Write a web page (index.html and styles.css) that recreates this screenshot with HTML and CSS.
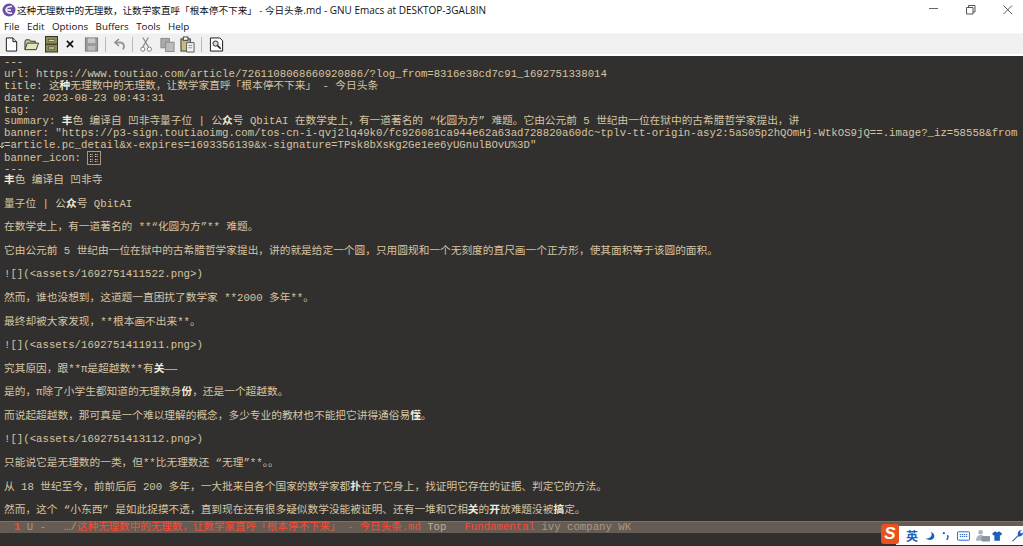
FILE: index.html
```html
<!DOCTYPE html>
<html lang="zh">
<head>
<meta charset="utf-8">
<title>GNU Emacs</title>
<link rel="stylesheet" href="styles.css">
</head>
<body>
<div class="window">
  <header class="titlebar">
    <svg class="appicon" viewBox="0 0 14 14"><circle cx="7" cy="7" r="6.5" fill="#6a4fa8"/><path d="M10 3.500C7 3 4 4.500 4 7s3 3.500 6 3M5 7h4" fill="none" stroke="#fff" stroke-width="1.500"/></svg>
    <span class="title"><span class="title-cjk">这种无理数中的无理数，让数学家直呼「根本停不下来」 - 今日头条</span>.md - GNU Emacs at DESKTOP-3GAL8IN</span>
    <div class="wincontrols">
      <svg width="10" height="10" viewBox="0 0 10 10"><path d="M0 3.500h9" stroke="#666" fill="none"/></svg>
      <svg width="10" height="10" viewBox="0 0 10 10"><path d="M.5 2.500h6.500v6.500H.5zM2.500 2.500V.5h6.500v6.500H7" stroke="#555" fill="none"/></svg>
      <svg width="10" height="10" viewBox="0 0 10 10"><path d="M.5.5l8.500 8.500M9 .5L.5 9" stroke="#555" fill="none"/></svg>
    </div>
  </header>
  <nav class="menubar"><span>File</span><span>Edit</span><span>Options</span><span>Buffers</span><span>Tools</span><span>Help</span></nav>
  <div class="toolbar">
    <svg class="tool" viewBox="0 0 16 17"><path d="M2.500 1.500h7l4 4v10h-11z" fill="#fff" stroke="#111"/><path d="M9.500 1.500v4h4" fill="#ddd" stroke="#111"/></svg>
    <svg class="tool" viewBox="0 0 16 17"><path d="M1 14V5l1-1.500h4L7 5h5v2" fill="#c4c89a" stroke="#333"/><path d="M1 14l2.500-7H15.500L13 14z" fill="#e3e4b8" stroke="#333"/></svg>
    <svg class="tool nar" viewBox="0 0 13 17"><rect x=".5" y=".5" width="12" height="15.500" fill="#8e8a55" stroke="#333"/><path d="M1 8.200h11" stroke="#222"/><rect x="3.500" y="3.500" width="6" height="2" fill="#dcd9a8" stroke="#333" stroke-width=".5"/><rect x="3.500" y="11" width="6" height="2" fill="#dcd9a8" stroke="#333" stroke-width=".5"/></svg>
    <svg class="tool x" viewBox="0 0 9 9"><path d="M1 1l7 7M8 1L1 8" stroke="#111" stroke-width="1.800"/></svg>
    <svg class="tool" viewBox="0 0 16 17"><rect x="1.500" y="1.500" width="13" height="14" fill="#999" stroke="#777"/><rect x="4" y="2" width="8" height="5" fill="#c8c8c8"/><rect x="4" y="10" width="8" height="5" fill="#bbb"/></svg>
    <i class="sep"></i>
    <svg class="tool undo" viewBox="0 0 13 17"><path d="M10 13.500c2-3 1-7-3-7H3" fill="none" stroke="#999" stroke-width="2"/><path d="M6 3L2 6.500 6 10" fill="none" stroke="#888" stroke-width="1.500"/></svg>
    <i class="sep sep2"></i>
    <svg class="tool" viewBox="0 0 16 17"><path d="M3 1l6 10M9 1L3 11" stroke="#888" stroke-width="1.300"/><circle cx="3" cy="13.500" r="2.200" fill="#fff" stroke="#777"/><circle cx="10" cy="13.500" r="2.200" fill="#fff" stroke="#777"/></svg>
    <svg class="tool" viewBox="0 0 16 17"><rect x="1" y="2" width="9" height="10" fill="#aaa" stroke="#888"/><rect x="6" y="6" width="9" height="10" fill="#bbb" stroke="#888"/></svg>
    <svg class="tool" viewBox="0 0 16 17"><rect x="1" y="2.500" width="10" height="13" fill="#c2bd7c" stroke="#333"/><rect x="3.500" y=".5" width="5" height="3.500" fill="#fff" stroke="#333"/><path d="M7 6.500h8v10H7z" fill="#f4f4f4" stroke="#555"/><path d="M9 9.500h4M9 12h4" stroke="#888"/></svg>
    <i class="sep sep3"></i>
    <svg class="tool" viewBox="0 0 16 17"><path d="M1.500 1.500h10l3 3v11h-13z" fill="#fff" stroke="#111"/><circle cx="7" cy="7.500" r="2.800" fill="#cfd8e8" stroke="#222"/><path d="M9 9.500l3.500 3.500" stroke="#111" stroke-width="1.600"/></svg>
  </div>
  <main class="editor">
    <div class="front">
      <div class="row dash">---</div>
      <div class="row">url: https://www.toutiao.com/article/7261108068660920886/?log_from=8316e38cd7c91_1692751338014</div>
      <div class="row">title: 这<b>种</b>无理数中的无理数，让数学家直呼「根本停不下来」 - 今日头条</div>
      <div class="row">date: 2023-08-23 08:43:31</div>
      <div class="row">tag:</div>
      <div class="row">summary: <b>丰</b>色 编译自 凹非寺量子位 | 公<b>众</b>号 QbitAI 在数学史上，有一道著名的 “化圆为方” 难题。它由公元前 5 世纪由一位在狱中的古希腊哲学家提出，讲</div>
      <div class="row">banner: "https://p3-sign.toutiaoimg.com/tos-cn-i-qvj2lq49k0/fc926081ca944e62a63ad728820a60dc~tplv-tt-origin-asy2:5aS05p2hQOmHj-WtkOS9jQ==.image?_iz=58558&amp;from</div>
      <div class="row wrapped"><svg class="fringe" width="4" height="7" viewBox="0 0 4 7"><path d="M4 1H2v4M0 4l2 2 2-2" fill="none" stroke="#d5c4a1"/></svg>=article.pc_detail&amp;x-expires=1693356139&amp;x-signature=TPsk8bXsKg2Ge1ee6yUGnulBOvU%3D"</div>
      <div class="row">banner_icon: <svg class="tofu" width="14" height="14" viewBox="0 0 14 14"><rect x=".5" y=".5" width="13" height="13" fill="none" stroke="#a89984"/><path d="M3 3.500h3M8 3.500h3M3 5.500h3M8 5.500h3M3 8.500h3M8 8.500h3M3 10.500h3M8 10.500h3" stroke="#d5c4a1" stroke-dasharray="1 .6"/></svg></div>
      <div class="row">---</div>
    </div>
    <div class="body">
      <p><b>丰</b>色 编译自 凹非寺</p>
      <p>量子位 | 公<b>众</b>号 QbitAI</p>
      <p>在数学史上，有一道著名的 **“化圆为方”** 难题。</p>
      <p>它由公元前 5 世纪由一位在狱中的古希腊哲学家提出，讲的就是给定一个圆，只用圆规和一个无刻度的直尺画一个正方形，使其面积等于该圆的面积。</p>
      <p>![](&lt;assets/1692751411522.png&gt;)</p>
      <p>然而，谁也没想到，这道题一直困扰了数学家 **2000 多年**。</p>
      <p>最终却被大家发现，**根本画不出来**。</p>
      <p>![](&lt;assets/1692751411911.png&gt;)</p>
      <p>究其原因，跟**π是超越数**有<b>关</b>——</p>
      <p>是的，π除了小学生都知道的无理数身<b>份</b>，还是一个超越数。</p>
      <p>而说起超越数，那可真是一个难以理解的概念，多少专业的教材也不能把它讲得通俗易<b>懂</b>。</p>
      <p>![](&lt;assets/1692751413112.png&gt;)</p>
      <p>只能说它是无理数的一类，但**比无理数还 “无理”**。。</p>
      <p>从 18 世纪至今，前前后后 200 多年，一大批来自各个国家的数学家都<b>扑</b>在了它身上，找证明它存在的证据、判定它的方法。</p>
      <p>然而，这个 “小东西” 是如此捉摸不透，直到现在还有很多疑似数学没能被证明、还有一堆和它相<b>关</b>的<b>开</b>放难题没被<b>搞</b>定。</p>
    </div>
  </main>
  <footer class="modeline"><span class="ml-red ml-num">1</span><span class="ml-gray"> U -</span><span class="ml-path">…/</span><span class="ml-red ml-name">这种无理数中的无理数，让数学家直呼「根本停不下来」 - 今日头条.md</span><span class="ml-tan"> Top</span><span class="ml-red ml-mode">Fundamental</span><span class="ml-dim"> ivy company WK</span></footer>
  <div class="echo"></div>
  <aside class="ime">
    <span class="ime-logo">S</span>
    <div class="ime-bar">
      <span class="ime-ch">英</span>
      <svg width="11" height="12" viewBox="0 0 12 12"><path d="M7 1c2 4 0 8-6 8 3 3 10 2 10-3 0-2-2-4-4-5z" fill="#1d5fbd"/></svg>
      <svg width="8" height="12" viewBox="0 0 8 12"><circle cx="2" cy="3" r="1.200" fill="#1d5fbd"/><path d="M6 5c1 2 0 4-1 5" stroke="#1d5fbd" stroke-width="1.500" fill="none"/></svg>
      <svg width="14" height="10" viewBox="0 0 14 10"><rect x=".5" y=".5" width="13" height="9" rx="1" fill="#fff" stroke="#1d5fbd"/><path d="M3 3.500h8M3 5.500h8" stroke="#1d5fbd" stroke-dasharray="1.500 .7"/></svg>
      <svg class="ime-person" width="15" height="13" viewBox="0 0 15 13"><circle cx="5" cy="3" r="2.500" fill="#a9b3bd"/><path d="M0 12c0-4 2-6 5-6s5 2 5 6z" fill="#a9b3bd"/><rect x="6" y="7" width="9" height="6" rx="1" fill="#8b95a0"/></svg>
      <svg class="ime-shirt" width="11" height="12" viewBox="0 0 13 12"><path d="M4 0l2.500 1.500L9 0l4 3-2 2.500-1-.5v7H3V5l-1 .5L0 3z" fill="#1d5fbd"/></svg>
      <svg class="ime-wrench" width="12" height="13" viewBox="0 0 12 13"><path d="M1 12l6-6c-1-3 1-5 4-5L9 3l1 1.500 2-1c0 3-2 4.500-5 4l-5 5z" fill="#1d5fbd"/></svg>
    </div>
  </aside>
</div>
</body>
</html>
```
FILE: styles.css
```css
* { box-sizing: border-box; }
html, body { margin: 0; padding: 0; background: #32302f; overflow: hidden; }
.window {
  position: relative;
  width: 1023px;
  height: 546px;
  display: flex;
  flex-direction: column;
  overflow: hidden;
}
.titlebar {
  height: 20px;
  background: #fff;
  display: flex;
  align-items: center;
  padding-left: 2px;
  gap: 1px;
  color: #111;
}
.appicon { width: 14px; height: 14px; flex: none; }
.title { font: 10px "Open Sans", "Noto Sans CJK SC", sans-serif; white-space: nowrap; }
.title-cjk { font-size: 9.600px; }
.wincontrols { margin-left: auto; display: flex; gap: 27px; padding-right: 10px; align-items: center; }
.menubar {
  height: 13px;
  background: #fff;
  display: flex;
  gap: 7.500px;
  padding-left: 4px;
  align-items: center;
  font: 9.800px "Open Sans", sans-serif;
  color: #111;
}
.toolbar {
  height: 23px;
  background: #f0f0f0;
  border-top: 1px solid #f6f6f6;
  border-bottom: 2px solid #fff;
  display: flex;
  align-items: center;
  padding-left: 4px;
  gap: 5px;
}
.tool { width: 15px; height: 17px; flex: none; }
.tool.nar { width: 13px; margin-left: 1px; }
.tool.x { width: 8px; height: 8px; margin: 0 5px 0 3px; }
.tool.undo { width: 13px; }
.sep { width: 1px; height: 15px; background: #b9b9b9; margin: 0 2px 0 1px; flex: none; }
.sep2 { margin-left: 1px; }
.sep3 { margin-left: 1px; }
.editor {
  flex: none;
  height: 465px;
  background: #32302f;
  color: #d5c4a1;
  font: 10.700px/12px "Liberation Mono", "Noto Sans CJK SC", monospace;
  padding: 0 0 0 4px;
  overflow: hidden;
}
.row { height: 11.900px; white-space: pre; }
.wrapped { position: relative; }
.fringe { position: absolute; left: -4px; top: 3px; }
.tofu { vertical-align: -4px; }
.body { margin-top: -0.700px; }
.body p { margin: 0 0 11.570px; height: 12px; white-space: pre; }
b { font-weight: 700; color: #f4ecd8; }
.modeline {
  position: absolute;
  left: 0;
  right: 0;
  top: 521px;
  height: 12px;
  background: #665c54;
  border-top: 1px solid #7c6f64;
  font: 10.700px/11px "Liberation Mono", "Noto Sans CJK SC", monospace;
  white-space: pre;
  padding-left: 14px;
  display: flex;
}
.ml-red { color: #fb4934; }
.ml-num { font-weight: 700; }
.ml-gray { color: #a89984; margin-right: 18px; }
.ml-path { color: #a89984; }
.ml-name { font-size: 10.550px; }
.ml-tan { color: #bdae93; margin-right: 18px; }
.ml-dim { color: #a89984; }
.echo { flex: 1; background: #32302f; }
.ime { position: absolute; left: 880px; top: 524px; width: 143px; height: 21px; }
.ime-logo {
  position: absolute;
  left: 1px; top: 0;
  width: 18px; height: 20px;
  z-index: 1;
  border-radius: 3px;
  background: #e9521e;
  color: #fff;
  font: italic 700 17px/20px "Liberation Sans", sans-serif;
  text-align: center;
}
.ime-bar {
  position: absolute;
  left: 16px; top: 2px; right: 0; bottom: 0;
  background: #fff;
  display: flex;
  align-items: center;
  gap: 7px;
  padding-left: 10px;
  overflow: hidden;
}
.ime-ch { color: #1d5fbd; font: 700 12px "Noto Sans CJK SC", sans-serif; }
.ime-person { margin-left: -1px; }
.ime-shirt { margin-left: -5px; }
.ime-wrench { margin-left: 2px; flex: none; }
```
